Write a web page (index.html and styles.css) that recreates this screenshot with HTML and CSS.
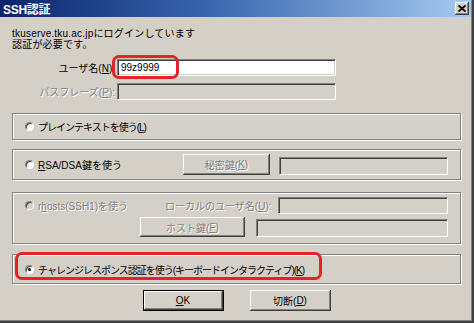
FILE: index.html
```html
<!DOCTYPE html>
<html lang="ja">
<head>
<meta charset="utf-8">
<title>SSH認証</title>
<link rel="stylesheet" href="styles.css">
</head>
<body>
<div class="window">
  <div class="titlebar">
    <span class="title">SSH認証</span>
    <span class="close"><svg width="8" height="7" viewBox="0 0 8 7"><path d="M0.5 0.5 L7.5 6.5 M7.5 0.5 L0.5 6.5" stroke="#000" stroke-width="1.8" fill="none"/></svg></span>
  </div>
  <div class="content">
    <div class="msg">tkuserve.tku.ac.jpにログインしています<br>認証が必要です。</div>
    <div class="frow">
      <span class="flabel">ユーザ名(<u>N</u>):</span>
      <span class="field white">99z9999</span>
    </div>
    <div class="frow frow2">
      <span class="flabel disabled">パスフレーズ(<u>P</u>):</span>
      <span class="field"></span>
    </div>
    <div class="group g1">
      <span class="opt"><span class="radio"></span><span class="tight">プレインテキストを使う(<u>L</u>)</span></span>
    </div>
    <div class="group g2">
      <span class="opt opt2"><span class="radio"></span><span><u>R</u>SA/DSA鍵を使う</span></span>
      <span class="btn key-btn disabled">秘密鍵(<u>K</u>)</span>
      <span class="field key-field"></span>
    </div>
    <div class="group g3">
      <div class="g3row">
        <span class="opt opt3 disabled"><span class="radio off"></span><span>r<u>h</u>osts(SSH1)を使う</span></span>
        <span class="g3label disabled">ローカルのユーザ名(<u>U</u>):</span>
        <span class="field g3field"></span>
      </div>
      <div class="g3row g3row2">
        <span class="btn host-btn disabled">ホスト鍵(<u>F</u>)</span>
        <span class="field host-field"></span>
      </div>
    </div>
    <div class="group g4">
      <span class="opt"><span class="radio checked"></span><span class="tight">チャレンジレスポンス認証を使う(キーボードインタラクティブ)(<u>K</u>)</span></span>
    </div>
    <div class="actions">
      <span class="btn action default"><u>O</u>K</span>
      <span class="btn action">切断(<u>D</u>)</span>
    </div>
  </div>
  <div class="mark mark1"></div>
  <div class="mark mark2"></div>
</div>
</body>
</html>
```
FILE: styles.css
```css
* { box-sizing: border-box; }
html, body { margin: 0; padding: 0; }
body {
  width: 474px;
  height: 323px;
  overflow: hidden;
  background: #d4d0c8;
  font-family: "Liberation Sans", "Noto Sans CJK JP", sans-serif;
  font-size: 10px;
  color: #000;
}
.window {
  position: relative;
  width: 474px;
  height: 323px;
  background: #d4d0c8;
  display: flex;
  flex-direction: column;
  border-right: 2px solid #404040;
  border-bottom: 2px solid #404040;
  box-shadow: inset -1px -1px 0 #808080;
}
.titlebar {
  height: 17px;
  flex-shrink: 0;
  margin-right: 1px;
  background: linear-gradient(to right, #0a246a 0%, #3a67b0 45%, #a6caf0 100%);
  display: flex;
  align-items: center;
  justify-content: space-between;
  padding: 0 2px 0 3px;
}
.title {
  color: #fff;
  font-weight: bold;
  font-size: 12px;
  letter-spacing: -0.3px;
}
.close {
  width: 14px;
  height: 13px;
  background: #d4d0c8;
  box-shadow: inset -1px -1px 0 #404040, inset 1px 1px 0 #fff, inset -2px -2px 0 #808080;
  display: flex;
  align-items: center;
  justify-content: center;
  padding-bottom: 1px;
}
.close svg { display: block; }
.content {
  flex: 1;
  padding: 11px 11px 0 12px;
  display: flex;
  flex-direction: column;
}
.msg { line-height: 11px; letter-spacing: 0.2px; }
.frow {
  display: flex;
  align-items: center;
  height: 17px;
  margin-top: 9px;
}
.frow2 { margin-top: 7px; }
.flabel {
  width: 105px;
  text-align: right;
  padding-right: 2px;
  white-space: nowrap;
}
.disabled {
  color: #808080;
  text-shadow: 1px 1px 0 #fff;
}
.tight { letter-spacing: -1px; }
.field {
  display: flex;
  align-items: center;
  height: 17px;
  background: #d4d0c8;
  border: 1px solid;
  border-color: #808080 #fff #fff #808080;
  box-shadow: inset 1px 1px 0 #404040, inset -1px -1px 0 #d4d0c8;
  padding-left: 3px;
}
.frow .field { width: 219px; }
.field.white { background: #fff; }
.group {
  border: 1px solid #808080;
  box-shadow: inset 1px 1px 0 #fff, 1px 1px 0 #fff;
  padding: 0 12px;
  display: flex;
}
.opt {
  display: flex;
  align-items: center;
  gap: 4px;
  white-space: nowrap;
}
.radio {
  width: 9px;
  height: 9px;
  border-radius: 50%;
  background: #fff;
  border: 1px solid;
  border-color: #808080 #fff #fff #808080;
  box-shadow: inset 1px 1px 0 #404040;
  flex-shrink: 0;
  position: relative;
}
.radio.off { background: #d4d0c8; }
.radio.checked::after {
  content: "";
  position: absolute;
  left: 2px;
  top: 2px;
  width: 3px;
  height: 3px;
  border-radius: 50%;
  background: #000;
}
.g1 { margin-top: 13px; height: 27px; align-items: center; }
.g2 { margin-top: 9px; height: 31px; align-items: center; }
.opt2 { width: 158px; }
.btn {
  display: flex;
  align-items: center;
  justify-content: center;
  background: #d4d0c8;
  box-shadow: inset -1px -1px 0 #404040, inset 1px 1px 0 #fff, inset -2px -2px 0 #808080;
  white-space: nowrap;
}
.key-btn { width: 87px; height: 21px; }
.key-field { flex: 1; height: 18px; margin-left: 9px; margin-top: 3px; }
.g3 {
  margin-top: 12px;
  height: 52px;
  padding-top: 4px;
  flex-direction: column;
}
.g3row { display: flex; align-items: center; height: 17px; }
.opt3 { width: 140px; }
.g3label { width: 113px; white-space: nowrap; }
.g3field { flex: 1; }
.g3row2 { margin-top: 3px; height: 20px; align-items: stretch; }
.host-btn { margin-left: 115px; width: 105px; height: 20px; }
.host-field { flex: 1; height: 18px; margin-left: 11px; align-self: flex-end; }
.g4 { margin-top: 10px; height: 30px; align-items: center; }
.actions {
  margin-top: 6px;
  display: flex;
  justify-content: center;
  gap: 26px;
}
.action { width: 81px; height: 21px; }
.action.default { border: 1px solid #000; }
.mark {
  position: absolute;
  border: 3px solid #e3222b;
  border-radius: 7px;
}
.mark1 { left: 112px; top: 55px; width: 67px; height: 24px; }
.mark2 { left: 15px; top: 252px; width: 307px; height: 28px; }
```
